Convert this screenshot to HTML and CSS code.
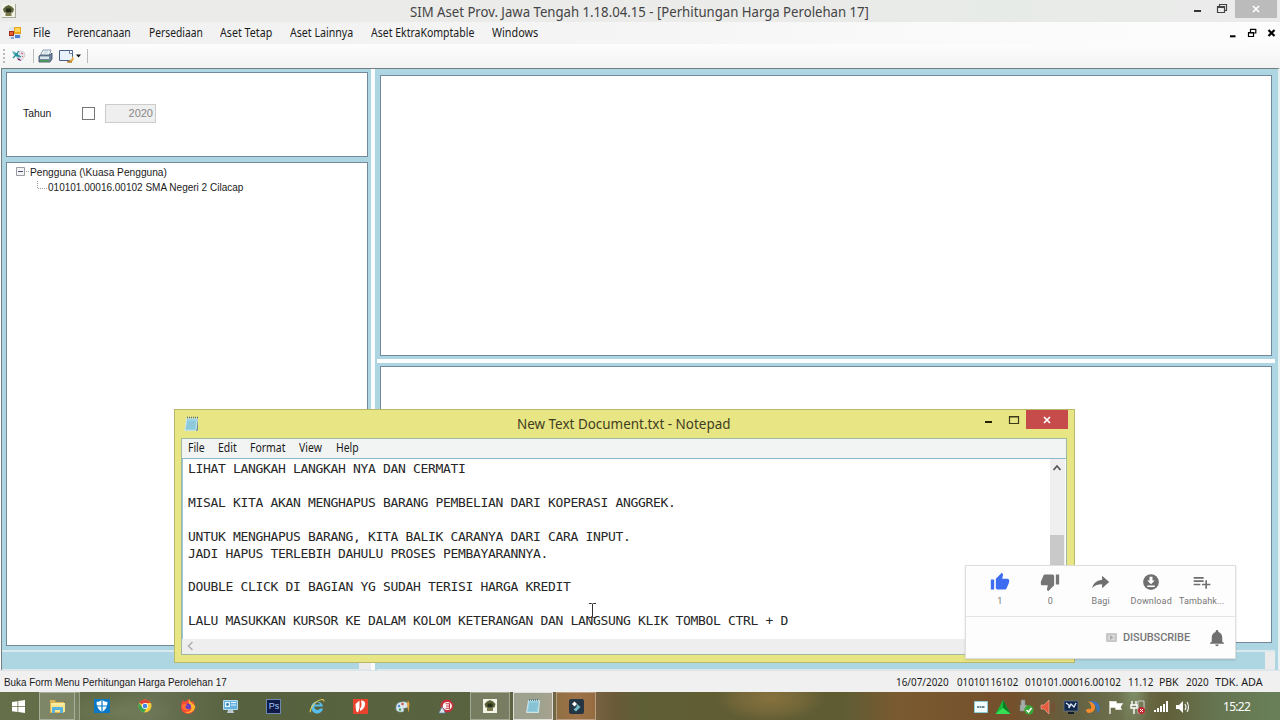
FILE: index.html
```html
<!DOCTYPE html>
<html lang="id">
<head>
<meta charset="utf-8">
<title>SIM Aset Prov. Jawa Tengah</title>
<link rel="stylesheet" href="styles.css">
</head>
<body>
<div class="desktop">
  <header class="titlebar">
    <svg class="emblem" width="14" height="14" viewBox="0 0 14 14"><path d="M0 0h14v14H0z" fill="#a8a89b"/><path d="M0 0h13v13H0z" fill="#f3f3e8"/><path d="M6.500 1l3 1.500L12 5l-1 3.500H2L1 5l2.500-2.500z" fill="#5a6438"/><path d="M3.500 8.500h6V12h-6z" fill="#7d7a4c"/><path d="M4 4.500h5v4H4z" fill="#262d18"/></svg>
    <h1 class="app-title">SIM Aset Prov. Jawa Tengah 1.18.04.15 - [Perhitungan Harga Perolehan 17]</h1>
    <div class="win-buttons">
      <svg width="40" height="18" viewBox="0 0 40 18"><path d="M4 10h7v2H4z" fill="#333"/><path d="M27.500 6.500h7v6h-7zM27 7.500h8M29.500 6V4.500h7v6H35" fill="none" stroke="#444" stroke-width="1.200"/></svg>
      <span class="close-idle"><svg width="8" height="8" viewBox="0 0 8 8"><path d="M1 1l6 6M7 1L1 7" stroke="#fff" stroke-width="1.700"/></svg></span>
    </div>
  </header>

  <nav class="menubar">
    <svg class="form-icon" width="14" height="14" viewBox="0 0 14 14"><path d="M1 1h12v12H1z" fill="#dfe5ef"/><path d="M6 1h7v7H6z" fill="#e9a51e"/><path d="M7 2h5v4H7z" fill="#ffd65a"/><path d="M1 5h5v5H1z" fill="#a32d18"/><path d="M2 6h3v3H2z" fill="#e06137"/><path d="M7 9h5v3H7z" fill="#4c7ed1"/><path d="M3 11h3v2H3z" fill="#8ca9d8"/></svg>
    <span class="m m1">File</span><span class="m m2">Perencanaan</span><span class="m m3">Persediaan</span><span class="m m4">Aset Tetap</span><span class="m m5">Aset Lainnya</span><span class="m m6">Aset EktraKomptable</span><span class="m m7">Windows</span>
    <svg class="mdi" width="52" height="12" viewBox="0 0 52 12"><path d="M2 8.300h5.500v2H2z"/><path d="M20.500 6h5v3.500h-5zM20 5.500h6M22.500 5V2.500h5.300V6H26M22 2.300h6" fill="none" stroke="#000" stroke-width="1.200"/><path d="M40.500 3l6 6M46.500 3l-6 6" stroke="#000" stroke-width="2.200"/></svg>
  </nav>

  <div class="toolbar">
    <span class="grip"></span>
    <svg class="t-tool" width="15" height="14" viewBox="0 0 15 14"><path d="M8 2l5 1 1 4-4 5-2-2z" fill="#ece6ec" stroke="#c5bcc8" stroke-width=".7"/><path d="M1 2l4 1.500 4 3.500-2 2-4-3z" fill="#5fb1ba"/><path d="M2 9l4-4M7.500 2L5 7M4 5l6 3" stroke="#1f8f9a" stroke-width="1.200"/><path d="M6 9l3 1 1 2-3-1z" fill="#6b2465"/><path d="M10 4l2 1M11 7l1 1" stroke="#d04a68"/></svg>
    <span class="sep"></span>
    <svg class="t-print" width="15" height="14" viewBox="0 0 15 14"><path d="M5 1h8l-2 6H2z" fill="#f3f8fb" stroke="#7b8fa4" stroke-width=".9"/><path d="M1 7l2-1h9l2-2v6l-2 3H1z" fill="#7089a0" stroke="#42566d" stroke-width=".9"/><path d="M2 7.500h9v2.500H2z" fill="#dbe6ee"/><path d="M2 11h9v1.500H2z" fill="#43a047"/><path d="M6 3h4M5 5h4" stroke="#a9bccb" stroke-width=".8"/></svg>
    <svg class="t-form" width="23" height="14" viewBox="0 0 23 14"><path d="M.5 1.500h13v10H.5z" fill="#e8f1fc" stroke="#4a5f8b"/><path d="M10.500 1v3.500H14" fill="#fff" stroke="#4a5f8b" stroke-width=".8"/><path d="M8 12q5 0 5.500-5l1.500 3-2.500 3.500H9z" fill="#e8ad42"/><path d="M8 13h5" stroke="#9d702b" stroke-width="1.200"/><path d="M17 5.500h5L19.500 8.500z" fill="#111"/></svg>
    <span class="sep"></span>
  </div>

  <main class="workspace">
    <section class="left-col">
      <div class="filter panel">
        <span class="lbl">Tahun</span><span class="check"></span><span class="year">2020</span>
      </div>
      <div class="tree panel">
        <div class="node"><svg width="13" height="9" viewBox="0 0 13 9"><path d="M.5.5h8v8h-8z" fill="#f4f4f6" stroke="#9a9aa4"/><path d="M2 4.500h5" stroke="#44506e"/><path d="M10 4.500h3" stroke="#aaa" stroke-dasharray="1 1"/></svg><span class="t-root">Pengguna (\Kuasa Pengguna)</span></div>
        <div class="node child"><svg width="10" height="12" viewBox="0 0 10 12"><path d="M.5 0v7.500H10" fill="none" stroke="#999" stroke-dasharray="1 1"/></svg><span class="t-leaf">010101.00016.00102 SMA Negeri 2 Cilacap</span></div>
      </div>
      <div class="strip"><span class="strip-end"></span></div>
    </section>
    <div class="splitter"></div>
    <section class="right-col">
      <div class="panel grid-top"></div>
      <div class="hsplit"></div>
      <div class="panel grid-bottom"></div>
      <div class="strip"><span class="strip-end"></span></div>
    </section>
  </main>

  <footer class="status"><span class="s-left">Buka Form Menu Perhitungan Harga Perolehan 17</span><span class="s-right"><span class="s1">16/07/2020</span><span class="s2">01010116102</span><span class="s3">010101.00016.00102</span><span class="s4">11.12</span><span class="s5">PBK</span><span class="s6">2020</span><span class="s7">TDK. ADA</span></span></footer>

  <div class="taskbar">
    <div class="slot start"><svg width="14" height="13" viewBox="0 0 14 13"><path d="M0 2l5.500-.8v5H0zM6.300 1L13 0v6.200H6.300zM0 7h5.500v5L0 11.200zM6.300 7H13v6l-6.700-1z" fill="#fff"/></svg></div>
    <div class="slot open explorer"><svg width="17" height="15" viewBox="0 0 17 15"><path d="M1 1h5l1 2h8v11H1z" fill="#dcb650"/><path d="M2 4h14v9H2z" fill="#f8e58d"/><path d="M3 14V9q0-1 1-1h9q1 0 1 1v5h-3v-3H6v3z" fill="#55b2de"/><path d="M3 5h11" stroke="#fff7c5"/></svg></div>
    <div class="stack"></div>
    <div class="slot"><svg width="16" height="16" viewBox="0 0 16 16"><path d="M0 1h16v14H0z" fill="#0878c7"/><path d="M8 2q3 2 5.500 2 0 7-5.500 10Q2.500 11 2.500 4 5 4 8 2z" fill="#fff"/><path d="M8 2v12M2.500 8h11" stroke="#0878c7" stroke-width="1.200"/></svg></div>
    <div class="slot"><svg width="14" height="14" viewBox="0 0 14 14"><circle cx="7" cy="7" r="6.500" fill="#f6cb35"/><path d="M7 7L1.400 3.700A6.500 6.500 0 0 1 12.800 4H7z" fill="#dc4437"/><path d="M1.200 4A6.500 6.500 0 0 0 6 13.400L8.500 9 4 8z" fill="#35a354"/><circle cx="7" cy="7" r="3" fill="#fff"/><circle cx="7" cy="7" r="2.300" fill="#4285e8"/></svg></div>
    <div class="slot"><svg width="16" height="16" viewBox="0 0 16 16"><path d="M3 2l2 2q2-2 4-3 0 2 3 3l1-1q2 3 2 6a7 7 0 0 1-14 0q0-4 2-7z" fill="#fa4b36"/><path d="M9 1q1 3 4 5t2 4a7 7 0 0 1-10 4q8 0 6-6-3-1-2-7z" fill="#ffb52b"/><circle cx="8" cy="8.500" r="3" fill="#6a3ec0"/><path d="M2 7q3-2 5 0L5 9q2 3 5 2-5 3-8-1z" fill="#ff7130"/></svg></div>
    <div class="slot"><svg width="15" height="15" viewBox="0 0 15 15"><path d="M.5 1.500h14v9H.5z" fill="#63b1df" stroke="#b7d9eb"/><path d="M2 3h5v5H2zM8 3h5v1H8zM8 5.500h5v1H8z" fill="#e8f6ff"/><circle cx="4.500" cy="5.500" r="1.400" fill="#327eb6"/><path d="M5 11h5l1 3H4z" fill="#b9cad1"/></svg></div>
    <div class="slot"><span class="ps">Ps</span></div>
    <div class="slot"><svg width="17" height="16" viewBox="0 0 17 16"><path d="M14 8.500H5.500A3 3 0 0 0 11 10.500h3A6 6 0 1 1 14 8.500zM5.500 6.500H11A2.800 2.800 0 0 0 5.500 6.500z" fill="#56bdec" fill-rule="evenodd"/><path d="M2.500 14Q-1 15 2 9.500 6 2 13 1q4 0 1.500 4 1-3-1.500-3Q8 2 3.500 9q-3 5-1 5z" fill="#f1cf50"/></svg></div>
    <div class="slot"><svg width="15" height="15" viewBox="0 0 15 15"><path d="M0 0h15v15H0z" fill="#e8432d"/><path d="M2.500 5l4-3.500V9L5 13.500 3 12z" fill="#fff"/><path d="M8 1.500q5 0 4 4.500-.8 4-5 6V9.500q1.500-1 1.500-4z" fill="#fff"/></svg></div>
    <div class="slot"><svg width="16" height="15" viewBox="0 0 16 15"><path d="M1 9q0-6 6-6 6-1 6 4 0 2-3 2t-1 2q0 2-3 2-5 0-5-4z" fill="#d9e7ed" stroke="#8eb0c0" stroke-width=".6"/><circle cx="4" cy="7" r="1.200" fill="#4289d5"/><circle cx="7.500" cy="5" r="1.200" fill="#ce4a3b"/><circle cx="5" cy="10.500" r="1.200" fill="#42a056"/><path d="M13 1l1.500 4-1 9-1.500-9z" fill="#e6a33b"/></svg></div>
    <div class="slot"><svg width="16" height="15" viewBox="0 0 16 15"><circle cx="9" cy="7" r="6.500" fill="#c7303b"/><ellipse cx="9.300" cy="7" rx="4.600" ry="4" fill="#fff"/><path d="M7.500 4.800h4v4.500h-4M8 7h3" fill="none" stroke="#c7303b" stroke-width="1.100"/><path d="M1 14l3-6 2 3 1 3z" fill="#e6e7e8" stroke="#538cb7" stroke-width=".7"/></svg></div>
    <div class="slot open first-open"><svg width="14" height="14" viewBox="0 0 14 14"><path d="M0 0h14v14H0z" fill="#f3f3e8"/><path d="M7 1l3 1.500L12.500 5l-1 3.500h-9L1.500 5 4 2.500z" fill="#5a6438"/><path d="M4 8.500h6V12H4z" fill="#7d7a4c"/><path d="M4.500 4.500h5v4h-5z" fill="#262d18"/></svg></div>
    <div class="slot open current"><svg width="14" height="14" viewBox="0 0 14 14"><path d="M2.500 1.500h11l-1 12H.5z" fill="#95cfdf" stroke="#e7f6fa" stroke-width=".7"/><path d="M3 1h10" stroke="#436d78" stroke-width="1.300" stroke-dasharray="1 1"/><path d="M3 5h9M3 7h9M3 9h8M2 11h9" stroke="#68aabd" stroke-width=".6"/></svg></div>
    <div class="slot open filmora"><svg width="15" height="15" viewBox="0 0 15 15"><rect width="15" height="15" rx="2" fill="#263544"/><path d="M5.500 2.500L8 5 5.500 7.500 3 5z" fill="#fff"/><path d="M8 5l3.500 3L7 12.500 4.500 10.500 7.500 8z" fill="#72b9c6"/></svg></div>
    <div class="tray">
      <svg width="16" height="16" viewBox="0 0 16 16"><path d="M1.500 2.500h13v11h-13z" fill="#f5feff" stroke="#8bcfd9"/><path d="M4 8h8" stroke="#39646d" stroke-width="1.500" stroke-dasharray="2 .5"/></svg>
      <svg width="16" height="16" viewBox="0 0 16 16"><path d="M8 1l7.500 14H.5z" fill="#16b83a"/><path d="M8 1v8l7.500 6z" fill="#087e20"/><path d="M.5 15L8 9l7.500 6z" fill="#38df56"/></svg>
      <svg width="16" height="16" viewBox="0 0 16 16"><path d="M3 1h4v5h2v6H2V6h1z" fill="#a5ada9" stroke="#7a827c" stroke-width=".6"/><circle cx="11" cy="11" r="4.700" fill="#38a735"/><path d="M8.500 11l2 2 3-4" fill="none" stroke="#fff" stroke-width="1.500"/></svg>
      <svg width="16" height="16" viewBox="0 0 16 16"><path d="M1 6h3l5-5v14l-5-5H1z" fill="#e45b3f" stroke="#f3b4a0" stroke-width=".6"/><path d="M11 5q2 3 0 6M13 3q3 5 0 10" fill="none" stroke="#7b4b33" stroke-width="1.200"/></svg>
      <svg width="16" height="16" viewBox="0 0 16 16"><path d="M1 2h14v10H1z" fill="#15294d" stroke="#63789a" stroke-width=".7"/><path d="M3 4l3 2v3l2-4 3 3 2-4" stroke="#e6f2ff" stroke-width="1.300" fill="none"/><path d="M5 13h6v2H5z" fill="#101b2c"/></svg>
      <svg width="16" height="16" viewBox="0 0 16 16"><path d="M4 2q10-1 11 7 0 3-3 5 1-8-8-12z" fill="#3d72bd"/><path d="M3 2q8 2 7 7-1 5-7 5-2-1-2-3 2-2 5-1 1-4-3-8z" fill="#f38b2c"/></svg>
      <svg width="16" height="16" viewBox="0 0 16 16"><path d="M2 2v13M3 3h5v2h6l-2 3 1 2H8V8H3z" fill="#fff" stroke="#fff" stroke-width="1.300"/></svg>
      <svg width="16" height="16" viewBox="0 0 16 16"><path d="M8 2h6v12H8z" fill="none" stroke="#d0d0cb"/><path d="M2 2v4M6 2v4M1 6h6v3H1zM4 9v6" stroke="#fff" stroke-width="1.400" fill="none"/><circle cx="11.500" cy="11.500" r="3.500" fill="#c3252e"/><path d="M10 10l3 3M13 10l-3 3" stroke="#fff"/></svg>
      <svg width="16" height="16" viewBox="0 0 16 16"><path d="M1 11h2v2H1zM4 9h2v4H4zM7 7h2v6H7zM10 5h2v8h-2zM13 2h2v11h-2z" fill="#fff"/></svg>
      <svg width="16" height="16" viewBox="0 0 16 16"><path d="M1 6h3l4-4v12l-4-4H1z" fill="#fff"/><path d="M10 5q2 3 0 6M12 3q3 5 0 10" fill="none" stroke="#eee" stroke-width="1.200"/></svg>
    </div>
    <span class="clock">15:22</span>
  </div>

  <div class="notepad">
    <div class="np-title">
      <svg class="np-icon" width="15" height="16" viewBox="0 0 15 16"><path d="M3 2h11v12l-1 1H1z" fill="#668f96"/><path d="M2.500 2.500h11l-1.500 12H.7z" fill="#9cd3e2" stroke="#e6f4f0" stroke-width=".7"/><path d="M3 1.500h11" stroke="#52686b" stroke-width="1.500" stroke-dasharray="1 1"/><path d="M3 6h9M3 8h8M2 10h9M2 12h9" stroke="#72b9cf" stroke-width=".7"/></svg>
      <span class="np-name">New Text Document.txt - Notepad</span>
      <div class="np-buttons"><svg width="44" height="18" viewBox="0 0 44 18"><path d="M3 11h7v2H3z" fill="#222200"/><path d="M27.500 6.500h9v7h-9zM27 7h10" fill="none" stroke="#3c3a18" stroke-width="1.200"/></svg><span class="np-close"><svg width="8" height="8" viewBox="0 0 8 8"><path d="M1 1l6 6M7 1L1 7" stroke="#fff" stroke-width="1.700"/></svg></span></div>
    </div>
    <div class="np-client">
      <div class="np-menu"><span class="n1">File</span><span class="n2">Edit</span><span class="n3">Format</span><span class="n4">View</span><span class="n5">Help</span></div>
      <div class="np-body">
        <pre class="np-text">LIHAT LANGKAH LANGKAH NYA DAN CERMATI

MISAL KITA AKAN MENGHAPUS BARANG PEMBELIAN DARI KOPERASI ANGGREK.

UNTUK MENGHAPUS BARANG, KITA BALIK CARANYA DARI CARA INPUT.
JADI HAPUS TERLEBIH DAHULU PROSES PEMBAYARANNYA.

DOUBLE CLICK DI BAGIAN YG SUDAH TERISI HARGA KREDIT

LALU MASUKKAN KURSOR KE DALAM KOLOM KETERANGAN DAN LANGSUNG KLIK TOMBOL CTRL + D</pre>
        <div class="vscroll"><svg width="15" height="18" viewBox="0 0 15 18"><path d="M3.500 11l3.500-4 3.500 4" fill="none" stroke="#555" stroke-width="1.700"/></svg><span class="thumb"></span></div>
      </div>
      <div class="hscroll"><svg width="16" height="14" viewBox="0 0 16 14"><path d="M10.500 3L6.500 7l4 4" fill="none" stroke="#b0b0b0" stroke-width="1.500"/></svg></div>
    </div>
    <svg class="ibeam" width="9" height="17" viewBox="0 0 9 17"><path d="M1 1.500h2.500l1 .5 1-.5H8M4.500 2v13M1 15.500h2.500l1-.5 1 .5H8" fill="none" stroke="#333"/></svg>
  </div>

  <div class="card">
    <div class="actions">
      <div class="act"><svg width="20" height="20" viewBox="0 0 24 24"><path d="M1 21h4V9H1v12zm22-11c0-1.100-.9-2-2-2h-6.310l.95-4.570.03-.32c0-.41-.17-.79-.44-1.060L14.170 1 7.590 7.590C7.220 7.950 7 8.450 7 9v10c0 1.100.9 2 2 2h9c.83 0 1.540-.5 1.840-1.220l3.020-7.050c.09-.23.14-.47.14-.73v-2z" fill="#3d6cf0"/></svg><span>1</span></div>
      <div class="act"><svg width="20" height="20" viewBox="0 0 24 24"><path d="M15 3H6c-.83 0-1.540.5-1.840 1.220l-3.020 7.050c-.09.23-.14.47-.14.73v2c0 1.100.9 2 2 2h6.310l-.95 4.570-.03.32c0 .41.17.79.44 1.060L9.830 23l6.590-6.590c.36-.36.58-.86.58-1.410V5c0-1.100-.9-2-2-2zm4 0v12h4V3h-4z" fill="#757575"/></svg><span>0</span></div>
      <div class="act"><svg width="19" height="20" viewBox="0 0 24 24"><path d="M14 9V4l9 8-9 8v-5.200C8 14.800 4 16.500 1.500 20 2.500 14.500 6 10 14 9z" fill="#6f6f6f"/></svg><span>Bagi</span></div>
      <div class="act"><svg width="18" height="20" viewBox="0 0 24 24"><circle cx="12" cy="12" r="10.500" fill="#6f6f6f"/><path d="M10 5h4v5h3l-5 5-5-5h3zM7 16.500h10v2H7z" fill="#fff"/></svg><span>Download</span></div>
      <div class="act"><svg width="20" height="20" viewBox="0 0 24 24"><path d="M14 10H2v2h12v-2zm0-4H2v2h12V6zm4 8v-4h-2v4h-4v2h4v4h2v-4h4v-2h-4zM2 16h8v-2H2v2z" fill="#6f6f6f"/></svg><span>Tambahk...</span></div>
    </div>
    <div class="subscribe">
      <svg width="11" height="9" viewBox="0 0 11 9"><rect width="11" height="9" rx="1" fill="#c8c8c8"/><path d="M2.500 2h6v5h-6z" fill="#ddd"/><path d="M4 2l3.500 2.500L4 7z" fill="#aaa"/></svg>
      <span class="sub-txt">DISUBSCRIBE</span>
      <svg class="bell" width="18" height="18" viewBox="0 0 24 24"><path d="M12 23c1.300 0 2.300-1 2.300-2.200H9.700C9.700 22 10.700 23 12 23zm7-6.500V11c0-3.500-2-6.300-5.200-7.100V3a1.800 1.800 0 0 0-3.600 0v.9C7 4.700 5 7.500 5 11v5.500l-2.300 2.200v1.100h18.600v-1.100z" fill="#6f6f6f"/></svg>
    </div>
  </div>
</div>
</body>
</html>
```
FILE: styles.css
```css
* { box-sizing: border-box; }
body { margin: 0; background: #fff; }
svg { display: block; flex: none; }
.desktop { position: relative; width: 1280px; height: 720px; overflow: hidden; display: flex; flex-direction: column; font-family: "Noto Sans", sans-serif; font-size: 12px; color: #1b1b1b; white-space: nowrap; }

/* Condensed interface text */
.app-title, .m, .lbl, .t-root, .t-leaf, .s-left, .s-right span, .np-name, .np-menu span { transform-origin: 0 50%; }

.titlebar { flex: 0 0 22px; display: flex; background: linear-gradient(90deg, #ebebea, #ebebea 60%, #e7ebe7 78%, #ebebeb); }
.emblem { margin: 4px 0 0 2px; }
.app-title { width: 459px; margin: 0 0 0 394px; font-weight: 400; font-size: 15px; line-height: 22px; transform: scaleX(.878); color: #444; }
.win-buttons { margin-left: auto; display: flex; gap: 5px; }
.close-idle { width: 42px; height: 18px; margin-right: 3px; background: #bbb; display: grid; place-items: center; }

.menubar { flex: 0 0 22px; display: flex; align-items: center; background: linear-gradient(90deg, #f0f0f0, #f5f5f5 50%, #fbfbfb 80%, #fdfdfd); }
.form-icon { margin: 0 11px 0 8px; }
.m { margin-right: 18px; line-height: 22px; }
.m1 { width: 16px; transform: scaleX(.9); }
.m2 { width: 64px; transform: scaleX(.865); }
.m3 { width: 53px; transform: scaleX(.855); }
.m4 { width: 52px; transform: scaleX(.89); }
.m5 { width: 63px; transform: scaleX(.885); }
.m6 { width: 103px; transform: scaleX(.875); }
.m7 { width: 47px; transform: scaleX(.9); }
.mdi { margin-left: auto; }

.toolbar { flex: 0 0 24px; display: flex; align-items: center; background: linear-gradient(#fdfdfd, #f3f3f3); }
.grip { width: 2px; height: 14px; margin: 0 6px 0 3px; background: repeating-linear-gradient(#bbb 0 2px, transparent 2px 4px); }
.t-tool { margin-right: 7px; }
.sep { width: 1px; height: 14px; background: #bbb; }
.t-print { margin: 0 6px 0 4px; }
.t-form { margin-right: 5px; }

.workspace { flex: 0 0 602px; display: flex; margin-left: 1px; background: #aed5e2; border-top: 1px solid #747d82; border-left: 1px solid #747d82; border-right: 2px solid #eaf1f3; }
.panel { background: #fff; border: 1px solid #71899a; }
.left-col { width: 369px; display: flex; flex-direction: column; padding-top: 3px; }
.left-col .panel { margin-left: 4px; width: 362px; }
.filter { height: 85px; display: flex; align-items: center; padding: 0 0 3px 16px; font-family: "Liberation Sans", sans-serif; font-size: 11px; }
.lbl { width: 59px; transform: scaleX(.94); }
.check { width: 13px; height: 13px; border: 1px solid #777; margin-right: 10px; }
.year { width: 51px; height: 19px; border: 1px solid #ccc; background: #efefef; color: #888; text-align: right; line-height: 16px; padding-right: 2px; }
.tree { height: 484px; margin-top: 5px; padding: 1px 0 0 9px; font-family: "Liberation Sans", sans-serif; font-size: 11px; }
.node { display: flex; align-items: center; height: 15px; gap: 1px; }
.t-root { transform: scaleX(.925); }
.t-leaf { transform: scaleX(.91); }
.child { padding-left: 21px; }
.strip { height: 20px; margin-top: auto; border-top: 2px solid #dbe8ed; border-bottom: 1px solid #dbe8ed; display: flex; justify-content: flex-end; }
.strip-end { width: 10px; background: #ebebeb; }
.left-col .strip-end { width: 12px; }
.splitter { width: 4px; background: #fbfdfd; }
.right-col { flex: 1; display: flex; flex-direction: column; padding: 6px 0 0 2px; }
.right-col .panel { margin: 0 0 0 3px; width: 892px; }
.grid-top { height: 281px; }
.hsplit { height: 4px; width: 898px; margin: 3px 0; background: #fcfefe; }
.grid-bottom { height: 277px; }
.right-col .strip { margin-right: 3px; }

.status { flex: 0 0 22px; display: flex; align-items: center; background: #f0f0f0; border-top: 1px solid #dce4e8; padding: 0 0 0 4px; }
.s-left { width: 892px; font-family: "Liberation Sans", sans-serif; font-size: 11.500px; transform: scaleX(.858); }
.s-right { display: flex; font-size: 11px; }
.s1 { width: 61px; transform: scaleX(.9); }
.s2 { width: 68px; transform: scaleX(.885); }
.s3 { width: 103px; transform: scaleX(.9); }
.s4 { width: 31px; transform: scaleX(.9); }
.s5 { width: 27px; transform: scaleX(.95); }
.s6 { width: 29px; transform: scaleX(.9); }
.s7 { width: 48px; transform: scaleX(.98); }

.taskbar { flex: 0 0 28px; display: flex; background:
  radial-gradient(ellipse 60px 20px at 120px 20px, #8c967455, transparent),
  radial-gradient(ellipse 55px 24px at 770px 6px, #a9854788, #a9854744 60%, transparent),
  radial-gradient(ellipse 16px 40px at 1134px 0, #7f8f68, transparent),
  linear-gradient(90deg, #656f49, #606a46 8%, #687152 12%, #56613f 19%, #59633f 36%, #5e6342 42%, #866a4b 45%, #6a5a38 48%, #5f5f36 50%, #605c34 56%, #5f5c34 66%, #7a5a30 70%, #74502c 79%, #646141 84%, #6f7350 88%, #625f3a 91%, #667551 95%, #688058); }
.slot { width: 43.100px; height: 28px; display: grid; place-items: center; }
.start { width: 37px; margin-right: 2px; }
.open { width: 40px; margin-right: 3.200px; background: #ffffff2c; border: 1px solid #ffffff55; }
.explorer { width: 36px; margin-right: 0; }
.first-open { margin-left: 2px; }
.stack { width: 5px; background: #ffffff22; border: 1px solid #ffffff44; border-left: 0; }
.current { background: #ffffff66; border-color: #ffffffaa; }
.filmora { background: #d0804055; }
.ps { width: 15px; height: 15px; background: #101a48; border: 1px solid #6c87b1; color: #9dc7f4; font: 9px/13px "Liberation Sans", sans-serif; text-align: center; }
.tray { margin-left: auto; display: flex; align-items: center; gap: 6.500px; padding-top: 1px; }
.clock { width: 26px; margin: 0 31px 0 32px; font-size: 12px; letter-spacing: -.7px; line-height: 29px; color: #fff; }

.notepad { position: absolute; left: 174px; top: 409px; width: 901px; height: 254px; padding: 0 7px 7px; background: #e8e584; border: 1px solid #b9b86a; display: flex; flex-direction: column; }
.np-title { height: 28px; display: flex; }
.np-icon { margin: 6px 0 0 2px; }
.np-name { width: 213px; margin-left: 318px; font-size: 14px; line-height: 28px; transform: scaleX(.96); color: #3f3e22; }
.np-buttons { margin-left: auto; display: flex; }
.np-close { width: 42px; height: 19px; background: #c64c4c; display: grid; place-items: center; margin-right: -1px; }
.np-client { flex: 1; border: 1px solid #9fb8a0; display: flex; flex-direction: column; background: #fff; margin-left: -1px; }
.np-menu { height: 20px; background: #f2f4f4; display: flex; line-height: 18px; padding-left: 6px; border-bottom: 1px solid #8db7ce; }
.np-menu span { transform: scaleX(.87); }
.n1 { width: 30px; } .n2 { width: 32px; } .n3 { width: 49px; } .n4 { width: 37px; }
.np-body { flex: 1; display: flex; min-height: 0; border-left: 1px solid #9ac4da; }
.np-text { flex: 1; margin: 0; padding: 2px 0 0 5px; font: 13px/16.900px "DejaVu Sans Mono", monospace; letter-spacing: -.326px; color: #262626; overflow: hidden; }
.vscroll { width: 15px; background: #efefef; margin-right: 1px; }
.thumb { display: block; width: 14px; height: 70px; margin-top: 58px; background: #c9c9c9; }
.hscroll { height: 15px; background: #eeeeef; }
.ibeam { position: absolute; left: 413px; top: 192px; }

.card { position: absolute; left: 965px; top: 565px; width: 271px; height: 94px; background: #fdfdfd; border: 1px solid #dedede; box-shadow: 0 1px 2px #0002; font-family: Roboto, sans-serif; color: #777; }
.actions { height: 51px; display: grid; grid-template-columns: repeat(5, 50.500px); padding: 6px 0 0 8.500px; border-bottom: 1px solid #e5e5e5; }
.act { display: flex; flex-direction: column; align-items: center; font-size: 9px; line-height: 12px; gap: 3px; letter-spacing: .15px; }
.subscribe { height: 41px; display: flex; align-items: center; padding-left: 140px; }
.sub-txt { width: 67px; margin: 0 18px 0 6px; font-size: 11px; font-weight: 500; letter-spacing: -.1px; }
```
